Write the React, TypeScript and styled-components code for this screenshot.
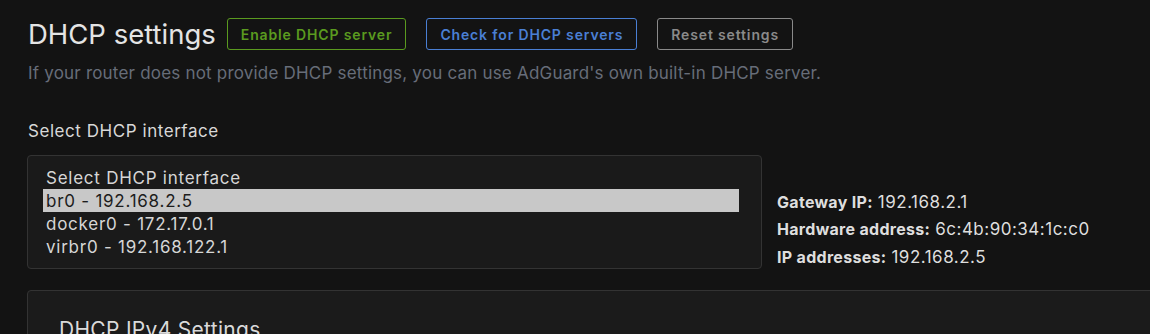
import styled, { createGlobalStyle } from "styled-components";

const GlobalStyle = createGlobalStyle`
  html, body {
    margin: 0;
    padding: 0;
    background: #131313;
    overflow: hidden;
  }
  body {
    font-family: Inter, "Noto Sans", "Liberation Sans", sans-serif;
    color: #dcdcdc;
  }
`;

const Page = styled.div`
  padding: 18px 0 0 27px;
`;

const Header = styled.div`
  display: flex;
  align-items: center;
  height: 32px;
  padding-left: 1px;
`;

const Title = styled.h1`
  margin: 0 11px 0 0;
  font-size: 27.5px;
  font-weight: 400;
  color: #e4e4e4;
  line-height: 32px;
`;

const Button = styled.button<{ $tone: string }>`
  height: 32px;
  margin-right: 20px;
  padding: 0 13px;
  background: transparent;
  border: 1px solid ${(p) => p.$tone};
  border-radius: 3px;
  color: ${(p) => p.$tone};
  font-family: inherit;
  font-size: 14px;
  font-weight: 600;
  letter-spacing: 0.85px;
`;

const Subtitle = styled.p`
  margin: 11px 0 0 1px;
  font-size: 17px;
  letter-spacing: 0.2px;
  line-height: 24px;
  color: #676d79;
`;

const Label = styled.div`
  margin: 34px 0 0 1px;
  font-size: 17px;
  letter-spacing: 0.55px;
  line-height: 24px;
  color: #d8d8d8;
`;

const Row = styled.div`
  display: flex;
  align-items: flex-end;
  margin-top: 12px;
`;

const SelectBox = styled.div`
  width: 735px;
  box-sizing: border-box;
  padding: 10px 22px 10px 15px;
  background: #1a1a1a;
  border: 1px solid #333333;
  border-radius: 4px;
`;

const Option = styled.div<{ $selected?: boolean }>`
  height: 23px;
  line-height: 24px;
  padding-left: 3px;
  font-size: 17px;
  letter-spacing: 0.75px;
  color: ${(p) => (p.$selected ? "#1c1c1c" : "#d6d6d6")};
  background: ${(p) => (p.$selected ? "#c8c8c8" : "transparent")};
`;

const Info = styled.div`
  margin: 0 0 -2px 15px;
`;

const InfoLine = styled.div`
  line-height: 27.5px;
  font-size: 17px;
  letter-spacing: 0.5px;
  color: #dedede;
`;

const InfoKey = styled.b`
  font-size: 16px;
  font-weight: 700;
  letter-spacing: 0.3px;
  margin-right: 5px;
`;

const Card = styled.div`
  margin: 21px -20px 0 0;
  padding: 24px 31px;
  height: 80px;
  background: #1b1b1b;
  border: 1px solid #333333;
  border-radius: 4px;
`;

const CardTitle = styled.h2`
  margin: 0;
  font-size: 21px;
  font-weight: 400;
  letter-spacing: 0.3px;
  color: #dadada;
  line-height: 30px;
`;

const options = [
  "Select DHCP interface",
  "br0 - 192.168.2.5",
  "docker0 - 172.17.0.1",
  "virbr0 - 192.168.122.1",
];

export default function App() {
  return (
    <>
      <GlobalStyle />
      <Page>
        <Header>
          <Title>DHCP settings</Title>
          <Button $tone="#5a9a1f">Enable DHCP server</Button>
          <Button $tone="#4a7fd4">Check for DHCP servers</Button>
          <Button $tone="#8a8a8a">Reset settings</Button>
        </Header>
        <Subtitle>
          If your router does not provide DHCP settings, you can use AdGuard's own built-in DHCP server.
        </Subtitle>
        <Label>Select DHCP interface</Label>
        <Row>
          <SelectBox>
            {options.map((o, i) => (
              <Option key={o} $selected={i === 1}>
                {o}
              </Option>
            ))}
          </SelectBox>
          <Info>
            <InfoLine>
              <InfoKey>Gateway IP:</InfoKey>192.168.2.1
            </InfoLine>
            <InfoLine>
              <InfoKey>Hardware address:</InfoKey>6c:4b:90:34:1c:c0
            </InfoLine>
            <InfoLine>
              <InfoKey>IP addresses:</InfoKey>192.168.2.5
            </InfoLine>
          </Info>
        </Row>
        <Card>
          <CardTitle>DHCP IPv4 Settings</CardTitle>
        </Card>
      </Page>
    </>
  );
}
